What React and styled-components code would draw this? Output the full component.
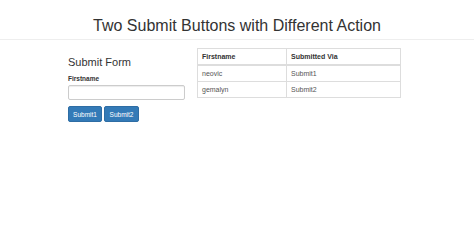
import React from "react";
import styled, { createGlobalStyle } from "styled-components";

const GlobalStyle = createGlobalStyle`
    body {
        margin: 0;
        background: #fff;
        font-family: "Liberation Sans", Arial, sans-serif;
        color: #333;
    }
`;

const Header = styled.div`
    padding: 17px 0 5px 0;
    display: flex;
    justify-content: center;
    border-bottom: 1px solid #eee;
`;

const Title = styled.h1`
    margin: 0;
    font-size: 16px;
    line-height: 17px;
    font-weight: normal;
    color: #333;
`;

const Content = styled.div`
    display: flex;
    align-items: flex-start;
    gap: 12px;
    padding: 8px 0 0 68px;
`;

const FormColumn = styled.form`
    width: 117px;
    display: flex;
    flex-direction: column;
    padding-top: 8px;
`;

const FormTitle = styled.h3`
    margin: 0 0 6px 0;
    font-size: 11px;
    line-height: 12px;
    font-weight: normal;
`;

const Label = styled.label`
    font-size: 6.5px;
    line-height: 9px;
    font-weight: bold;
    margin-bottom: 2px;
`;

const Input = styled.input`
    box-sizing: border-box;
    height: 15px;
    width: 100%;
    border: 1px solid #ccc;
    border-radius: 2px;
    box-shadow: inset 0 1px 1px rgba(0, 0, 0, 0.075);
    margin: 0 0 6px 0;
`;

const ButtonRow = styled.div`
    display: flex;
    gap: 2px;
`;

const Button = styled.button`
    box-sizing: border-box;
    height: 16px;
    width: ${(p) => p.w}px;
    padding: 0;
    background: #337ab7;
    border: 1px solid #2e6da4;
    border-radius: 2px;
    color: #fff;
    font-family: "Liberation Sans", Arial, sans-serif;
    font-size: 6.5px;
`;

const Table = styled.table`
    width: 204px;
    border-collapse: collapse;
    font-size: 7px;
    border: 1px solid #ddd;
`;

const Th = styled.th`
    text-align: left;
    height: 15px;
    padding: 0 4px;
    border: 1px solid #ddd;
    border-bottom-width: 2px;
    font-weight: bold;
    color: #333;
`;

const Td = styled.td`
    height: 15px;
    padding: 0 4px;
    border: 1px solid #ddd;
    color: #555;
`;

const rows = [
    { name: "neovic", via: "Submit1" },
    { name: "gemalyn", via: "Submit2" },
];

export default function App() {
    return (
        <>
            <GlobalStyle />
            <Header>
                <Title>Two Submit Buttons with Different Action</Title>
            </Header>
            <Content>
                <FormColumn onSubmit={(e) => e.preventDefault()}>
                    <FormTitle>Submit Form</FormTitle>
                    <Label>Firstname</Label>
                    <Input type="text" />
                    <ButtonRow>
                        <Button w={34}>Submit1</Button>
                        <Button w={35}>Submit2</Button>
                    </ButtonRow>
                </FormColumn>
                <Table>
                    <thead>
                        <tr>
                            <Th style={{ width: 80 }}>Firstname</Th>
                            <Th>Submitted Via</Th>
                        </tr>
                    </thead>
                    <tbody>
                        {rows.map((r) => (
                            <tr key={r.name}>
                                <Td>{r.name}</Td>
                                <Td>{r.via}</Td>
                            </tr>
                        ))}
                    </tbody>
                </Table>
            </Content>
        </>
    );
}
